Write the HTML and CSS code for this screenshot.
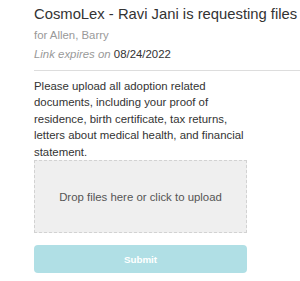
FILE: index.html
```html
<!DOCTYPE html>
<html>
<head>
<meta charset="utf-8">
<link rel="stylesheet" href="styles.css">
</head>
<body>
<div class="page">
  <header class="head">
    <h1 class="title">CosmoLex - Ravi Jani is requesting files</h1>
    <div class="client">for Allen, Barry</div>
    <div class="expires"><em>Link expires on</em> <span class="date">08/24/2022</span></div>
  </header>
  <div class="form">
    <p class="desc">Please upload all adoption related documents, including your proof of residence, birth certificate, tax returns, letters about medical health, and financial statement.</p>
    <div class="drop">Drop files here or click to upload</div>
    <button class="submit" type="button">Submit</button>
  </div>
</div>
</body>
</html>
```
FILE: styles.css
```css
html, body {
  margin: 0;
  padding: 0;
  background: #fff;
}
body {
  font-family: "Liberation Sans", Arial, sans-serif;
  color: #333;
  overflow: hidden;
}
.page {
  padding: 5px 0 0 34px;
}
.head {
  border-bottom: 1px solid #ddd;
  padding-bottom: 9px;
}
.title {
  margin: 0;
  font-size: 14.8px;
  font-weight: normal;
  line-height: 18px;
  white-space: nowrap;
}
.client {
  margin-top: 5px;
  font-size: 11.4px;
  line-height: 14px;
  color: #999;
}
.expires {
  margin-top: 5px;
  font-size: 11.4px;
  line-height: 14px;
  color: #999;
}
.date {
  color: #333;
}
.form {
  width: 213px;
}
.desc {
  margin: 7px 0 0;
  font-size: 11.4px;
  line-height: 16.4px;
  color: #333;
}
.drop {
  height: 73px;
  box-sizing: border-box;
  background: #efefef;
  border: 1px dashed #d2d2d2;
  display: flex;
  align-items: center;
  justify-content: center;
  font-size: 11.4px;
  color: #555;
}
.submit {
  display: block;
  width: 100%;
  margin-top: 12px;
  height: 28px;
  border: none;
  border-radius: 4px;
  background: #b0dfe5;
  color: #fff;
  font-family: "Liberation Sans", Arial, sans-serif;
  font-weight: bold;
  font-size: 9.8px;
}
```
